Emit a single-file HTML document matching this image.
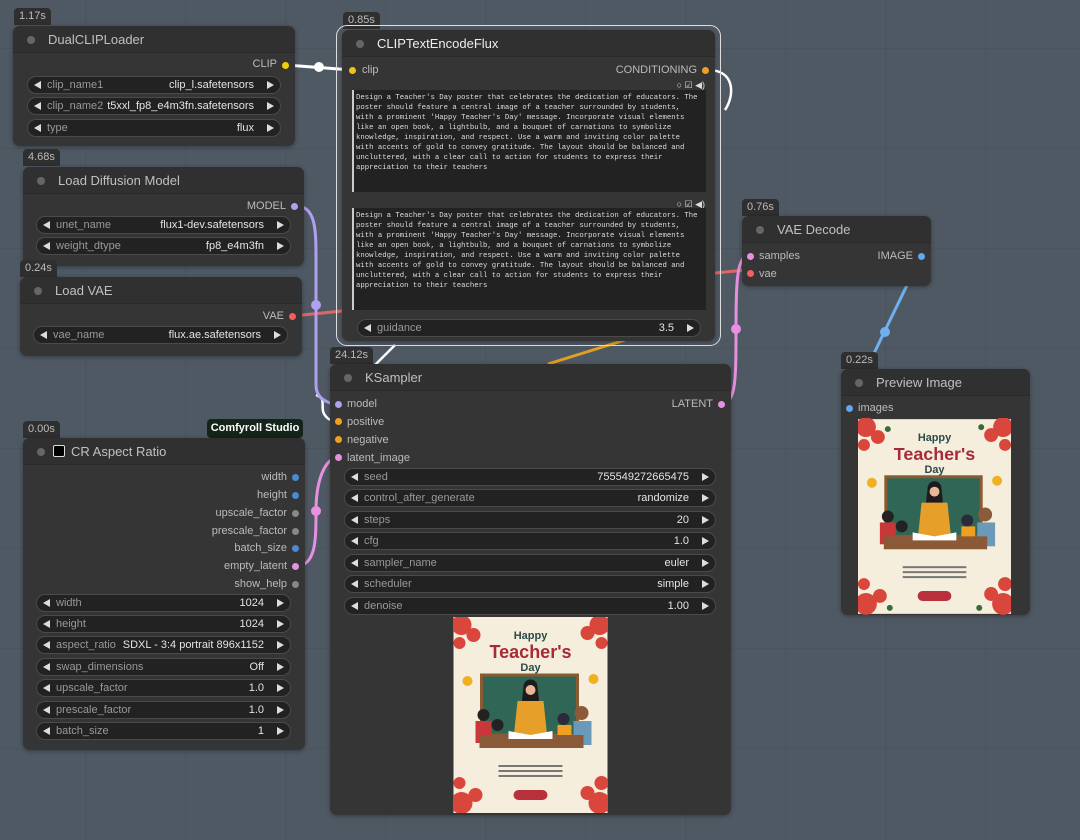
<!DOCTYPE html>
<html><head><meta charset="utf-8">
<style>
*{box-sizing:border-box;margin:0;padding:0}
html,body{width:1080px;height:840px;overflow:hidden}
body{background:#4f5963;font-family:"Liberation Sans",sans-serif;position:relative;
background-image:linear-gradient(rgba(0,0,0,.06) 1px,transparent 1px),linear-gradient(90deg,rgba(0,0,0,.06) 1px,transparent 1px);
background-size:100px 100px;background-position:-15px 48px}
.badge{position:absolute;background:#2f2f2f;color:#bbb;font-size:11px;line-height:17px;padding:0 5px;border-radius:4px 4px 0 0}
.node{position:absolute;background:#353535;border-radius:7px;box-shadow:0 1px 4px rgba(0,0,0,.35)}
.title{height:27px;background:#303030;border-radius:7px 7px 0 0;color:#c0c0c0;font-size:13px;line-height:27px;padding-left:35px;position:relative;border-bottom:1px solid #2a2a2a}
.title:before{content:"";position:absolute;left:14px;top:10px;width:8px;height:8px;border-radius:50%;background:#666}
.w{position:absolute;height:18px;background:#222;border:1px solid #4a4a4a;border-radius:9px;font-size:11px;line-height:16px;color:#999;padding-left:19px}
.w:before{content:"";position:absolute;left:6px;top:4px;border:4px solid transparent;border-right:7px solid #ddd;border-left:0}
.w:after{content:"";position:absolute;right:6px;top:4px;border:4px solid transparent;border-left:7px solid #ddd;border-right:0}
.w b{position:absolute;right:26px;top:0;color:#e4e4e4;font-weight:normal}
.o{position:absolute;font-size:11px;color:#bbb;text-align:right}
.i{position:absolute;font-size:11px;color:#bbb}
.d{position:absolute;width:7px;height:7px;border-radius:50%}
.ta{position:absolute;background:#222;border-left:2px solid #ccc;font-family:"Liberation Mono",monospace;font-size:7.3px;line-height:10px;color:#ddd;padding:3px 2px;white-space:pre;overflow:hidden}
.ic{position:absolute;font-size:9px;color:#ddd}
</style></head><body>

<svg width="1080" height="840" style="position:absolute;left:0;top:0" fill="none">
<path d="M293 316 L745 270" stroke="#e06666" stroke-width="3"/>
<path d="M708 70 C735 70 735 95 725 110" stroke="#fff" stroke-width="2.5"/>
<path d="M395 345 L375 365" stroke="#fff" stroke-width="2.5"/>
<path d="M316 395 C330 400 315 410 330 420" stroke="#fff" stroke-width="2.5"/>
<path d="M548 364 L625 340" stroke="#e0a020" stroke-width="3"/>
<path d="M296 206 C316 206 316 230 316 260 L316 385 C316 400 330 404 338 404" stroke="#b0a0f0" stroke-width="3"/>
<path d="M296 566 C316 566 316 540 316 511 C316 480 325 458 338 458" stroke="#e890e0" stroke-width="3"/>
<path d="M721 404 C736 404 736 380 736 329 C736 290 736 256 748 256" stroke="#e890e0" stroke-width="3"/>
<path d="M286 65 L352 70" stroke="#fff" stroke-width="3"/>
<path d="M921 256 C910 280 860 380 849 408" stroke="#70b0f0" stroke-width="3"/>
<circle cx="319" cy="67" r="5" fill="#fff"/>
<circle cx="316" cy="305" r="5" fill="#b0a0f0"/>
<circle cx="316" cy="511" r="5" fill="#e890e0"/>
<circle cx="736" cy="329" r="5" fill="#e890e0"/>
<circle cx="885" cy="332" r="5" fill="#70b0f0"/>
</svg>

<div class="badge" style="left:14px;top:8px">1.17s</div>
<div class="node" style="left:13px;top:26px;width:282px;height:120px">
<div class="title">DualCLIPLoader</div>
<div class="o" style="right:18px;top:32px">CLIP</div><div class="d" style="right:6px;top:36px;background:#f0d000"></div>
<div class="w" style="left:14px;top:50px;width:254px">clip_name1<b>clip_l.safetensors</b></div>
<div class="w" style="left:14px;top:71px;width:254px">clip_name2<b>t5xxl_fp8_e4m3fn.safetensors</b></div>
<div class="w" style="left:14px;top:93px;width:254px">type<b>flux</b></div>
</div>

<div class="badge" style="left:23px;top:149px">4.68s</div>
<div class="node" style="left:23px;top:167px;width:281px;height:99px">
<div class="title">Load Diffusion Model</div>
<div class="o" style="right:18px;top:33px">MODEL</div><div class="d" style="right:6px;top:36px;background:#b0a0f0"></div>
<div class="w" style="left:13px;top:49px;width:255px">unet_name<b>flux1-dev.safetensors</b></div>
<div class="w" style="left:13px;top:70px;width:255px">weight_dtype<b>fp8_e4m3fn</b></div>
</div>

<div class="badge" style="left:20px;top:260px">0.24s</div>
<div class="node" style="left:20px;top:277px;width:282px;height:79px">
<div class="title">Load VAE</div>
<div class="o" style="right:18px;top:33px">VAE</div><div class="d" style="right:6px;top:36px;background:#f06060"></div>
<div class="w" style="left:13px;top:49px;width:255px">vae_name<b>flux.ae.safetensors</b></div>
</div>

<div class="badge" style="left:343px;top:12px">0.85s</div>
<div style="position:absolute;left:336px;top:25px;width:385px;height:321px;border:1.5px solid #ddd;border-radius:11px"></div>
<div class="node" style="left:342px;top:30px;width:373px;height:311px">
<div class="title" style="color:#eee">CLIPTextEncodeFlux</div>
<div class="d" style="left:7px;top:37px;background:#f0c020"></div><div class="i" style="left:20px;top:34px">clip</div>
<div class="o" style="right:18px;top:34px">CONDITIONING</div><div class="d" style="right:6px;top:37px;background:#f0a020"></div>
<div class="ic" style="right:10px;top:50px">○ ☑ ◀)</div>
<div class="ta" style="left:10px;top:60px;width:354px;height:102px">Design a Teacher's Day poster that celebrates the dedication of educators. The
poster should feature a central image of a teacher surrounded by students,
with a prominent 'Happy Teacher's Day' message. Incorporate visual elements
like an open book, a lightbulb, and a bouquet of carnations to symbolize
knowledge, inspiration, and respect. Use a warm and inviting color palette
with accents of gold to convey gratitude. The layout should be balanced and
uncluttered, with a clear call to action for students to express their
appreciation to their teachers</div>
<div class="ic" style="right:10px;top:169px">○ ☑ ◀)</div>
<div class="ta" style="left:10px;top:178px;width:354px;height:102px">Design a Teacher's Day poster that celebrates the dedication of educators. The
poster should feature a central image of a teacher surrounded by students,
with a prominent 'Happy Teacher's Day' message. Incorporate visual elements
like an open book, a lightbulb, and a bouquet of carnations to symbolize
knowledge, inspiration, and respect. Use a warm and inviting color palette
with accents of gold to convey gratitude. The layout should be balanced and
uncluttered, with a clear call to action for students to express their
appreciation to their teachers</div>
<div class="w" style="left:15px;top:289px;width:344px">guidance<b>3.5</b></div>
</div>

<div class="badge" style="left:330px;top:347px">24.12s</div>
<div class="node" style="left:330px;top:364px;width:401px;height:451px">
<div class="title">KSampler</div>
<div class="d" style="left:5px;top:37px;background:#b0a0f0"></div><div class="i" style="left:17px;top:34px">model</div>
<div class="d" style="left:5px;top:54px;background:#f0a020"></div><div class="i" style="left:17px;top:52px">positive</div>
<div class="d" style="left:5px;top:72px;background:#f0a020"></div><div class="i" style="left:17px;top:70px">negative</div>
<div class="d" style="left:5px;top:90px;background:#e890e0"></div><div class="i" style="left:17px;top:88px">latent_image</div>
<div class="o" style="right:18px;top:34px">LATENT</div><div class="d" style="right:6px;top:37px;background:#e890e0"></div>
<div class="w" style="left:14px;top:104px;width:372px">seed<b>755549272665475</b></div>
<div class="w" style="left:14px;top:125px;width:372px">control_after_generate<b>randomize</b></div>
<div class="w" style="left:14px;top:147px;width:372px">steps<b>20</b></div>
<div class="w" style="left:14px;top:168px;width:372px">cfg<b>1.0</b></div>
<div class="w" style="left:14px;top:190px;width:372px">sampler_name<b>euler</b></div>
<div class="w" style="left:14px;top:211px;width:372px">scheduler<b>simple</b></div>
<div class="w" style="left:14px;top:233px;width:372px">denoise<b>1.00</b></div>
</div>

<div class="badge" style="left:23px;top:421px">0.00s</div>
<div style="position:absolute;left:207px;top:419px;width:96px;height:19px;background:#14241a;border-radius:4px;color:#fff;font-size:11px;line-height:19px;text-align:center;font-weight:bold">Comfyroll Studio</div>
<div class="node" style="left:23px;top:438px;width:282px;height:312px">
<div class="title" style="padding-left:48px">CR Aspect Ratio<span style="position:absolute;left:30px;top:7px;width:12px;height:12px;background:#000;border:1.5px solid #ddd;border-radius:2px"></span></div>
<div class="o" style="right:18px;top:33px">width</div><div class="d" style="right:6px;top:36px;background:#4a8ad0"></div>
<div class="o" style="right:18px;top:51px">height</div><div class="d" style="right:6px;top:54px;background:#4a8ad0"></div>
<div class="o" style="right:18px;top:69px">upscale_factor</div><div class="d" style="right:6px;top:72px;background:#888"></div>
<div class="o" style="right:18px;top:87px">prescale_factor</div><div class="d" style="right:6px;top:90px;background:#888"></div>
<div class="o" style="right:18px;top:104px">batch_size</div><div class="d" style="right:6px;top:107px;background:#4a8ad0"></div>
<div class="o" style="right:18px;top:122px">empty_latent</div><div class="d" style="right:6px;top:125px;background:#e890e0"></div>
<div class="o" style="right:18px;top:140px">show_help</div><div class="d" style="right:6px;top:143px;background:#888"></div>
<div class="w" style="left:13px;top:156px;width:255px">width<b>1024</b></div>
<div class="w" style="left:13px;top:177px;width:255px">height<b>1024</b></div>
<div class="w" style="left:13px;top:198px;width:255px">aspect_ratio<b>SDXL - 3:4 portrait 896x1152</b></div>
<div class="w" style="left:13px;top:220px;width:255px">swap_dimensions<b>Off</b></div>
<div class="w" style="left:13px;top:241px;width:255px">upscale_factor<b>1.0</b></div>
<div class="w" style="left:13px;top:263px;width:255px">prescale_factor<b>1.0</b></div>
<div class="w" style="left:13px;top:284px;width:255px">batch_size<b>1</b></div>
</div>

<div class="badge" style="left:742px;top:199px">0.76s</div>
<div class="node" style="left:742px;top:216px;width:189px;height:70px">
<div class="title">VAE Decode</div>
<div class="d" style="left:5px;top:37px;background:#e890e0"></div><div class="i" style="left:17px;top:34px">samples</div>
<div class="d" style="left:5px;top:54px;background:#f06060"></div><div class="i" style="left:17px;top:52px">vae</div>
<div class="o" style="right:18px;top:34px">IMAGE</div><div class="d" style="right:6px;top:37px;background:#60a8f0"></div>
</div>

<div class="badge" style="left:841px;top:352px">0.22s</div>
<div class="node" style="left:841px;top:369px;width:189px;height:246px">
<div class="title">Preview Image</div>
<div class="d" style="left:5px;top:36px;background:#60a8f0"></div><div class="i" style="left:17px;top:33px">images</div>
</div>

<svg style="position:absolute;left:858px;top:418px" width="153" height="197" viewBox="0 0 154 196">
<rect width="154" height="196" fill="#f5eedc"/>
<g fill="#d9463c"><circle cx="8" cy="8" r="10"/><circle cx="20" cy="18" r="7"/><circle cx="6" cy="26" r="6"/><circle cx="146" cy="8" r="10"/><circle cx="134" cy="16" r="7"/><circle cx="148" cy="26" r="6"/><circle cx="8" cy="186" r="11"/><circle cx="22" cy="178" r="7"/><circle cx="146" cy="186" r="11"/><circle cx="134" cy="176" r="7"/><circle cx="148" cy="166" r="7"/><circle cx="6" cy="166" r="6"/></g>
<g fill="#3a6a3a"><circle cx="30" cy="10" r="3"/><circle cx="124" cy="8" r="3"/><circle cx="32" cy="190" r="3"/><circle cx="122" cy="190" r="3"/></g>
<text x="77" y="22" font-size="11" font-weight="bold" fill="#2c4a48" text-anchor="middle" font-family="Liberation Sans">Happy</text>
<text x="77" y="41" font-size="18" font-weight="bold" fill="#a82a38" text-anchor="middle" font-family="Liberation Sans">Teacher's</text>
<text x="77" y="54" font-size="11" font-weight="bold" fill="#2c4a48" text-anchor="middle" font-family="Liberation Sans">Day</text>
<circle cx="14" cy="64" r="5" fill="#f0b020"/><circle cx="140" cy="62" r="5" fill="#f0b020"/>
<rect x="28" y="58" width="96" height="60" fill="#2f6656" stroke="#8a5a30" stroke-width="3"/>
<path d="M70 70 C70 60 84 60 84 70 L86 88 L68 88Z" fill="#1e1a1e"/><circle cx="77" cy="73" r="5" fill="#e9b896"/>
<path d="M64 84 L90 84 L94 122 L60 122Z" fill="#e6a02a"/>
<circle cx="30" cy="98" r="6" fill="#222"/><rect x="22" y="104" width="16" height="22" fill="#c8383a"/>
<circle cx="44" cy="108" r="6" fill="#222"/>
<circle cx="110" cy="102" r="6" fill="#2a2a3a"/><rect x="104" y="108" width="14" height="16" fill="#f0a020"/>
<circle cx="128" cy="96" r="7" fill="#8a5a3a"/><rect x="120" y="104" width="18" height="24" fill="#6a9ab8"/>
<rect x="26" y="118" width="104" height="13" fill="#8a5a38"/><path d="M55 114 L77 118 L99 114 L99 122 L55 122Z" fill="#fff"/>
<g fill="#777"><rect x="45" y="148" width="64" height="2"/><rect x="45" y="153" width="64" height="2"/><rect x="45" y="158" width="64" height="2"/></g>
<rect x="60" y="173" width="34" height="10" rx="5" fill="#b8303c"/>
</svg>
<svg style="position:absolute;left:453px;top:617px" width="155" height="196" viewBox="0 0 154 196">
<rect width="154" height="196" fill="#f5eedc"/>
<g fill="#d9463c"><circle cx="8" cy="8" r="10"/><circle cx="20" cy="18" r="7"/><circle cx="6" cy="26" r="6"/><circle cx="146" cy="8" r="10"/><circle cx="134" cy="16" r="7"/><circle cx="148" cy="26" r="6"/><circle cx="8" cy="186" r="11"/><circle cx="22" cy="178" r="7"/><circle cx="146" cy="186" r="11"/><circle cx="134" cy="176" r="7"/><circle cx="148" cy="166" r="7"/><circle cx="6" cy="166" r="6"/></g>
<text x="77" y="22" font-size="11" font-weight="bold" fill="#2c4a48" text-anchor="middle" font-family="Liberation Sans">Happy</text>
<text x="77" y="41" font-size="18" font-weight="bold" fill="#a82a38" text-anchor="middle" font-family="Liberation Sans">Teacher's</text>
<text x="77" y="54" font-size="11" font-weight="bold" fill="#2c4a48" text-anchor="middle" font-family="Liberation Sans">Day</text>
<circle cx="14" cy="64" r="5" fill="#f0b020"/><circle cx="140" cy="62" r="5" fill="#f0b020"/>
<rect x="28" y="58" width="96" height="60" fill="#2f6656" stroke="#8a5a30" stroke-width="3"/>
<path d="M70 70 C70 60 84 60 84 70 L86 88 L68 88Z" fill="#1e1a1e"/><circle cx="77" cy="73" r="5" fill="#e9b896"/>
<path d="M64 84 L90 84 L94 122 L60 122Z" fill="#e6a02a"/>
<circle cx="30" cy="98" r="6" fill="#222"/><rect x="22" y="104" width="16" height="22" fill="#c8383a"/>
<circle cx="44" cy="108" r="6" fill="#222"/>
<circle cx="110" cy="102" r="6" fill="#2a2a3a"/><rect x="104" y="108" width="14" height="16" fill="#f0a020"/>
<circle cx="128" cy="96" r="7" fill="#8a5a3a"/><rect x="120" y="104" width="18" height="24" fill="#6a9ab8"/>
<rect x="26" y="118" width="104" height="13" fill="#8a5a38"/><path d="M55 114 L77 118 L99 114 L99 122 L55 122Z" fill="#fff"/>
<g fill="#777"><rect x="45" y="148" width="64" height="2"/><rect x="45" y="153" width="64" height="2"/><rect x="45" y="158" width="64" height="2"/></g>
<rect x="60" y="173" width="34" height="10" rx="5" fill="#b8303c"/>
</svg>
</body></html>
